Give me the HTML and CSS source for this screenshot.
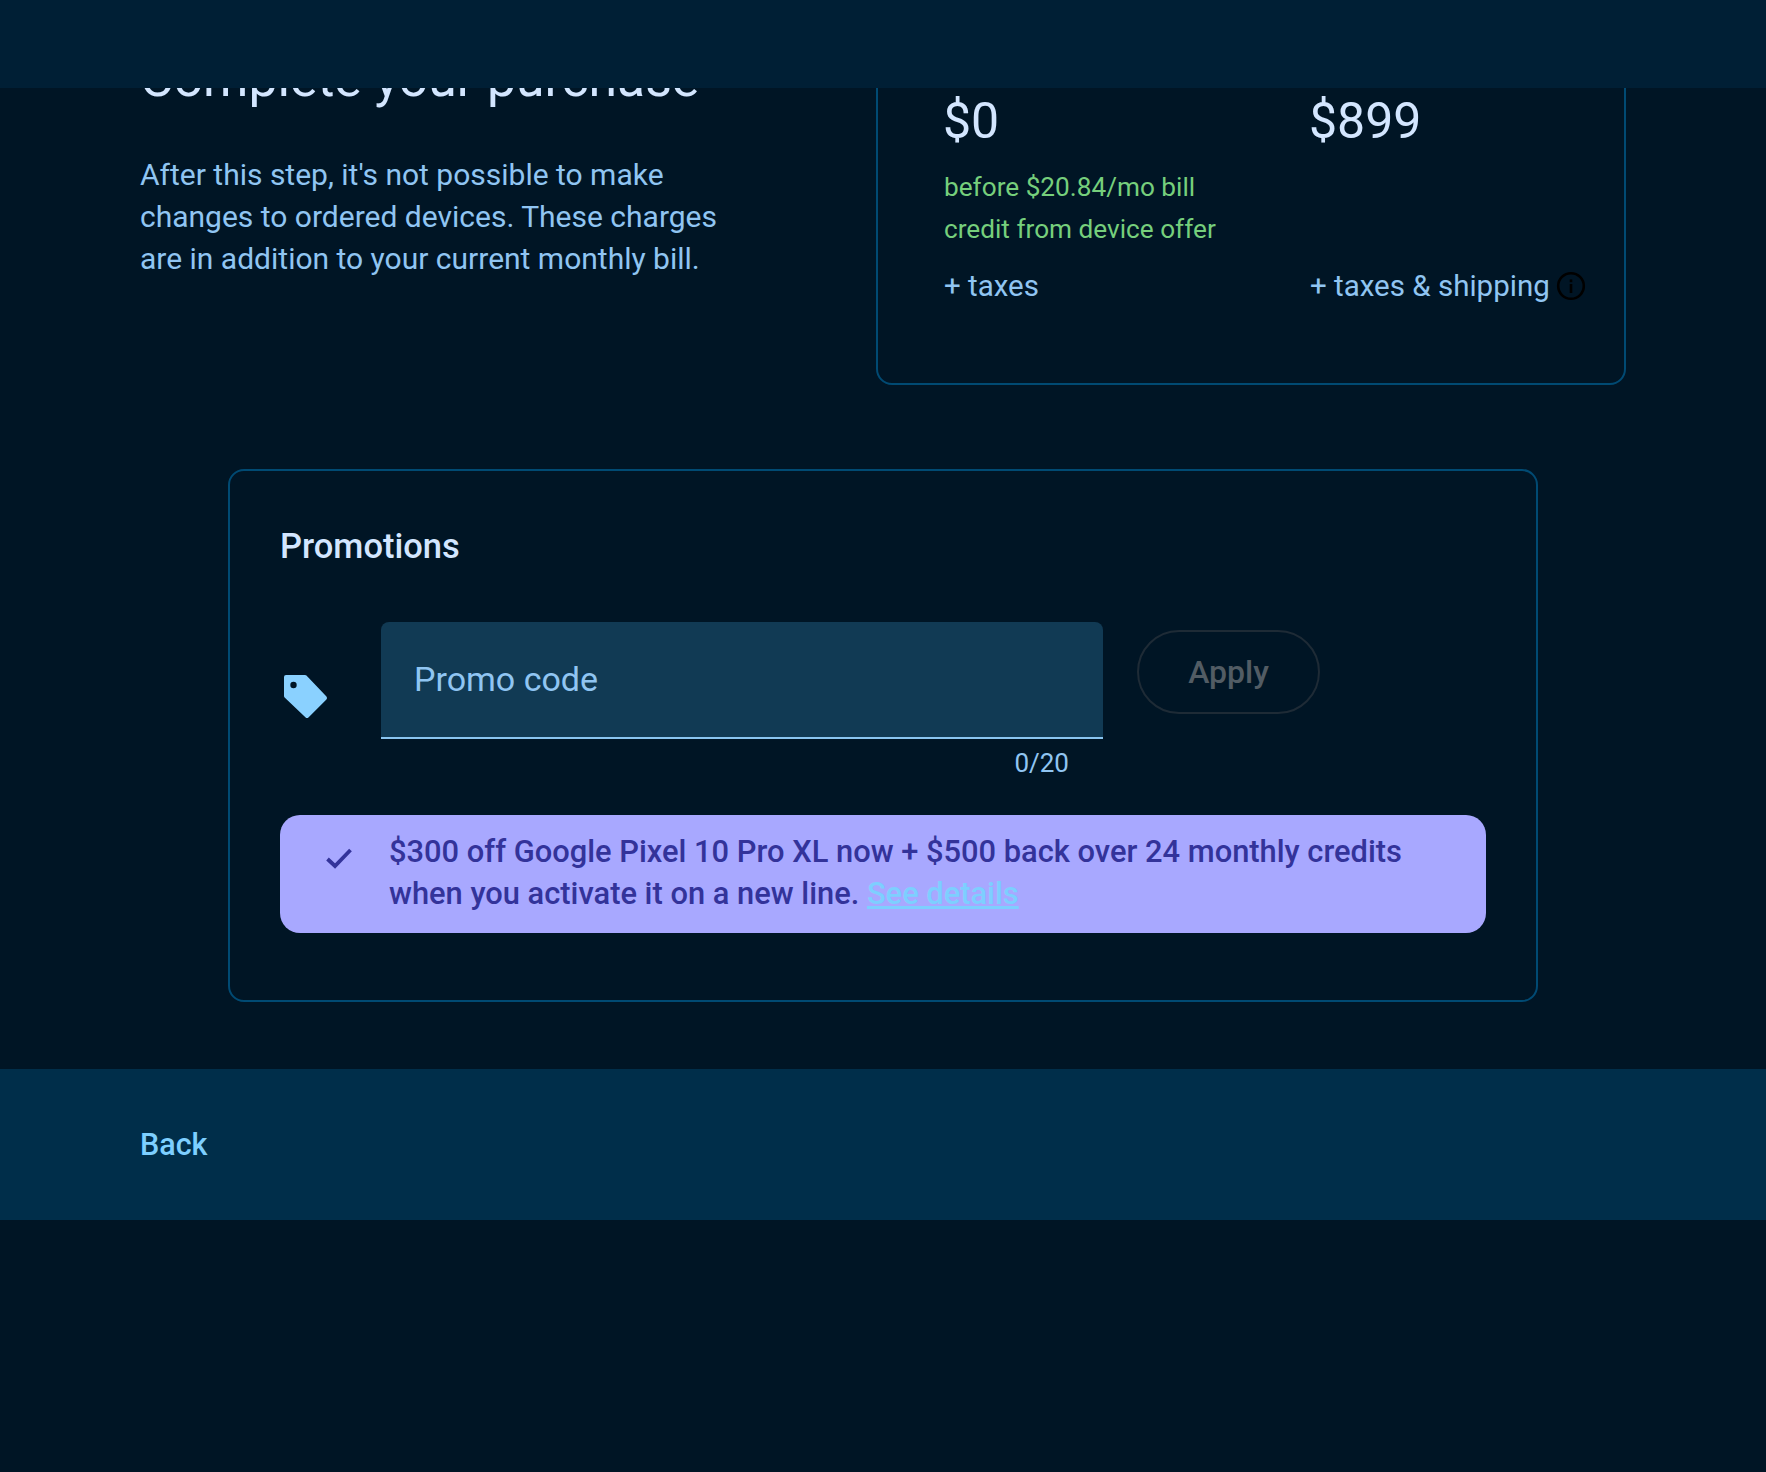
FILE: index.html
```html
<!DOCTYPE html>
<html lang="en">
<head>
    <meta charset="UTF-8">
    <meta name="viewport" content="width=device-width, initial-scale=1.0">
    <title>Complete your purchase</title>
    <link rel="stylesheet" href="styles.css">
</head>
<body>

<header class="top-bar"></header>

<main>
    <section class="summary-row">
        <div class="intro">
            <h1>Complete your purchase</h1>
            <p>After this step, it's not possible to make changes to ordered devices. These charges are in addition to your current monthly bill.</p>
        </div>
        <div class="summary-card">
            <div class="summary-col">
                <div class="price">$0</div>
                <div class="credit-note">before $20.84/mo bill<br>credit from device offer</div>
                <div class="extras">+ taxes</div>
            </div>
            <div class="summary-col">
                <div class="price">$899</div>
                <div class="extras">
                    + taxes &amp; shipping
                    <svg class="info-icon" viewBox="0 0 30 30" width="30" height="30" aria-hidden="true">
                        <circle cx="15" cy="15" r="12.8" fill="none" stroke="#000" stroke-width="2.6"/>
                        <rect x="13.7" y="13" width="2.6" height="9" fill="#000"/>
                        <rect x="13.7" y="8.4" width="2.6" height="2.8" fill="#000"/>
                    </svg>
                </div>
            </div>
        </div>
    </section>

    <section class="promo-card">
        <h2>Promotions</h2>
        <div class="promo-form">
            <svg class="tag-icon" viewBox="0 0 44 44" width="44" height="44" aria-hidden="true">
                <path fill="#8ad1ff" stroke="#8ad1ff" stroke-width="4" stroke-linejoin="round" d="M2 2H21L41 23L23 41L2 21Z"/>
                <circle cx="9.5" cy="10" r="3.2" fill="#001525"/>
            </svg>
            <div class="field-group">
                <div class="promo-field">Promo code</div>
                <div class="counter">0/20</div>
            </div>
            <button class="apply-btn" disabled>Apply</button>
        </div>
        <div class="offer-banner">
            <svg class="check-icon" viewBox="0 0 26 21" width="26" height="21" aria-hidden="true">
                <path d="M1.5 11L9 18L24.5 2" fill="none" stroke="#33339a" stroke-width="3.8"/>
            </svg>
            <p>$300 off Google Pixel 10 Pro XL now + $500 back over 24 monthly credits when you activate it on a new line. <a href="#">See details</a></p>
        </div>
    </section>
</main>

<footer class="bottom-bar">
    <a href="#" class="back-link">Back</a>
</footer>

</body>
</html>
```

FILE: styles.css
```css
body {
    font-family: Roboto, "Liberation Sans", sans-serif;
    margin: 0;
    background-color: #001525;
    min-height: 1472px;
    position: relative;
}
.top-bar {
    position: absolute;
    top: 0;
    left: 0;
    right: 0;
    height: 88px;
    background-color: #001f35;
    z-index: 2;
}
main {
    padding-top: 40px;
}
/* Intro and price card */
.summary-row {
    display: flex;
    justify-content: space-between;
    padding: 0 140px;
    margin-bottom: 84px;
}
.intro {
    width: 600px;
}
.intro h1 {
    font-size: 51.7px;
    font-weight: 400;
    line-height: 64px;
    color: #d3e6ff;
    margin: 7px 0 43px;
}
.intro p {
    font-size: 30px;
    line-height: 42px;
    color: #90c5f2;
    margin: 0;
}
.summary-card {
    box-sizing: border-box;
    width: 750px;
    display: grid;
    grid-template-columns: 366px 1fr;
    padding: 51px 33px 76px 66px;
    border: 2px solid #004a73;
    border-radius: 16px;
}
.summary-col {
    display: flex;
    flex-direction: column;
}
.price {
    font-size: 50px;
    line-height: 56px;
    color: #d3e6ff;
    margin-left: -1px;
}
.credit-note {
    font-size: 26.2px;
    line-height: 42px;
    color: #76cf7c;
    margin: 17px 0 15px;
}
.extras {
    display: flex;
    align-items: center;
    gap: 6px;
    font-size: 29.5px;
    line-height: 42px;
    color: #90c5f2;
    margin-top: auto;
    white-space: nowrap;
}
/* Promotions */
.promo-card {
    box-sizing: border-box;
    width: 1310px;
    margin: 0 auto 67px;
    padding: 55px 50px 67px;
    border: 2px solid #004a73;
    border-radius: 16px;
}
.promo-card h2 {
    font-size: 34.5px;
    font-weight: 500;
    line-height: 40px;
    color: #d3e6ff;
    margin: 0 0 56px;
}
.promo-form {
    display: flex;
    align-items: flex-start;
    margin-bottom: 36px;
}
.tag-icon {
    margin: 53px 53px 0 4px;
    flex-shrink: 0;
}
.field-group {
    width: 722px;
    margin-right: 34px;
}
.promo-field {
    box-sizing: border-box;
    height: 117px;
    padding: 33px;
    font-size: 34px;
    line-height: 48px;
    color: #90c5f2;
    background-color: #113a54;
    border-bottom: 2px solid #8ac5f0;
    border-radius: 8px 8px 0 0;
}
.counter {
    font-size: 26px;
    line-height: 32px;
    color: #90c5f2;
    text-align: right;
    padding-right: 34px;
    margin-top: 8px;
}
.apply-btn {
    width: 183px;
    height: 84px;
    margin-top: 8px;
    font-family: inherit;
    font-size: 32px;
    font-weight: 500;
    color: #525c64;
    background: none;
    border: 2px solid #1e2b36;
    border-radius: 42px;
}
.offer-banner {
    display: flex;
    align-items: flex-start;
    padding: 16px 40px 18px 46px;
    background-color: #a8a8ff;
    border-radius: 20px;
}
.check-icon {
    margin: 17px 37px 0 0;
    flex-shrink: 0;
}
.offer-banner p {
    font-size: 30.85px;
    font-weight: 500;
    line-height: 42px;
    color: #33339a;
    margin: 0;
}
.offer-banner a {
    color: #7dcfff;
}
/* Back bar */
.bottom-bar {
    display: flex;
    align-items: center;
    height: 151px;
    padding: 0 140px;
    background-color: #002e4a;
}
.back-link {
    font-size: 30.5px;
    font-weight: 500;
    color: #7dcfff;
    text-decoration: none;
}
```
